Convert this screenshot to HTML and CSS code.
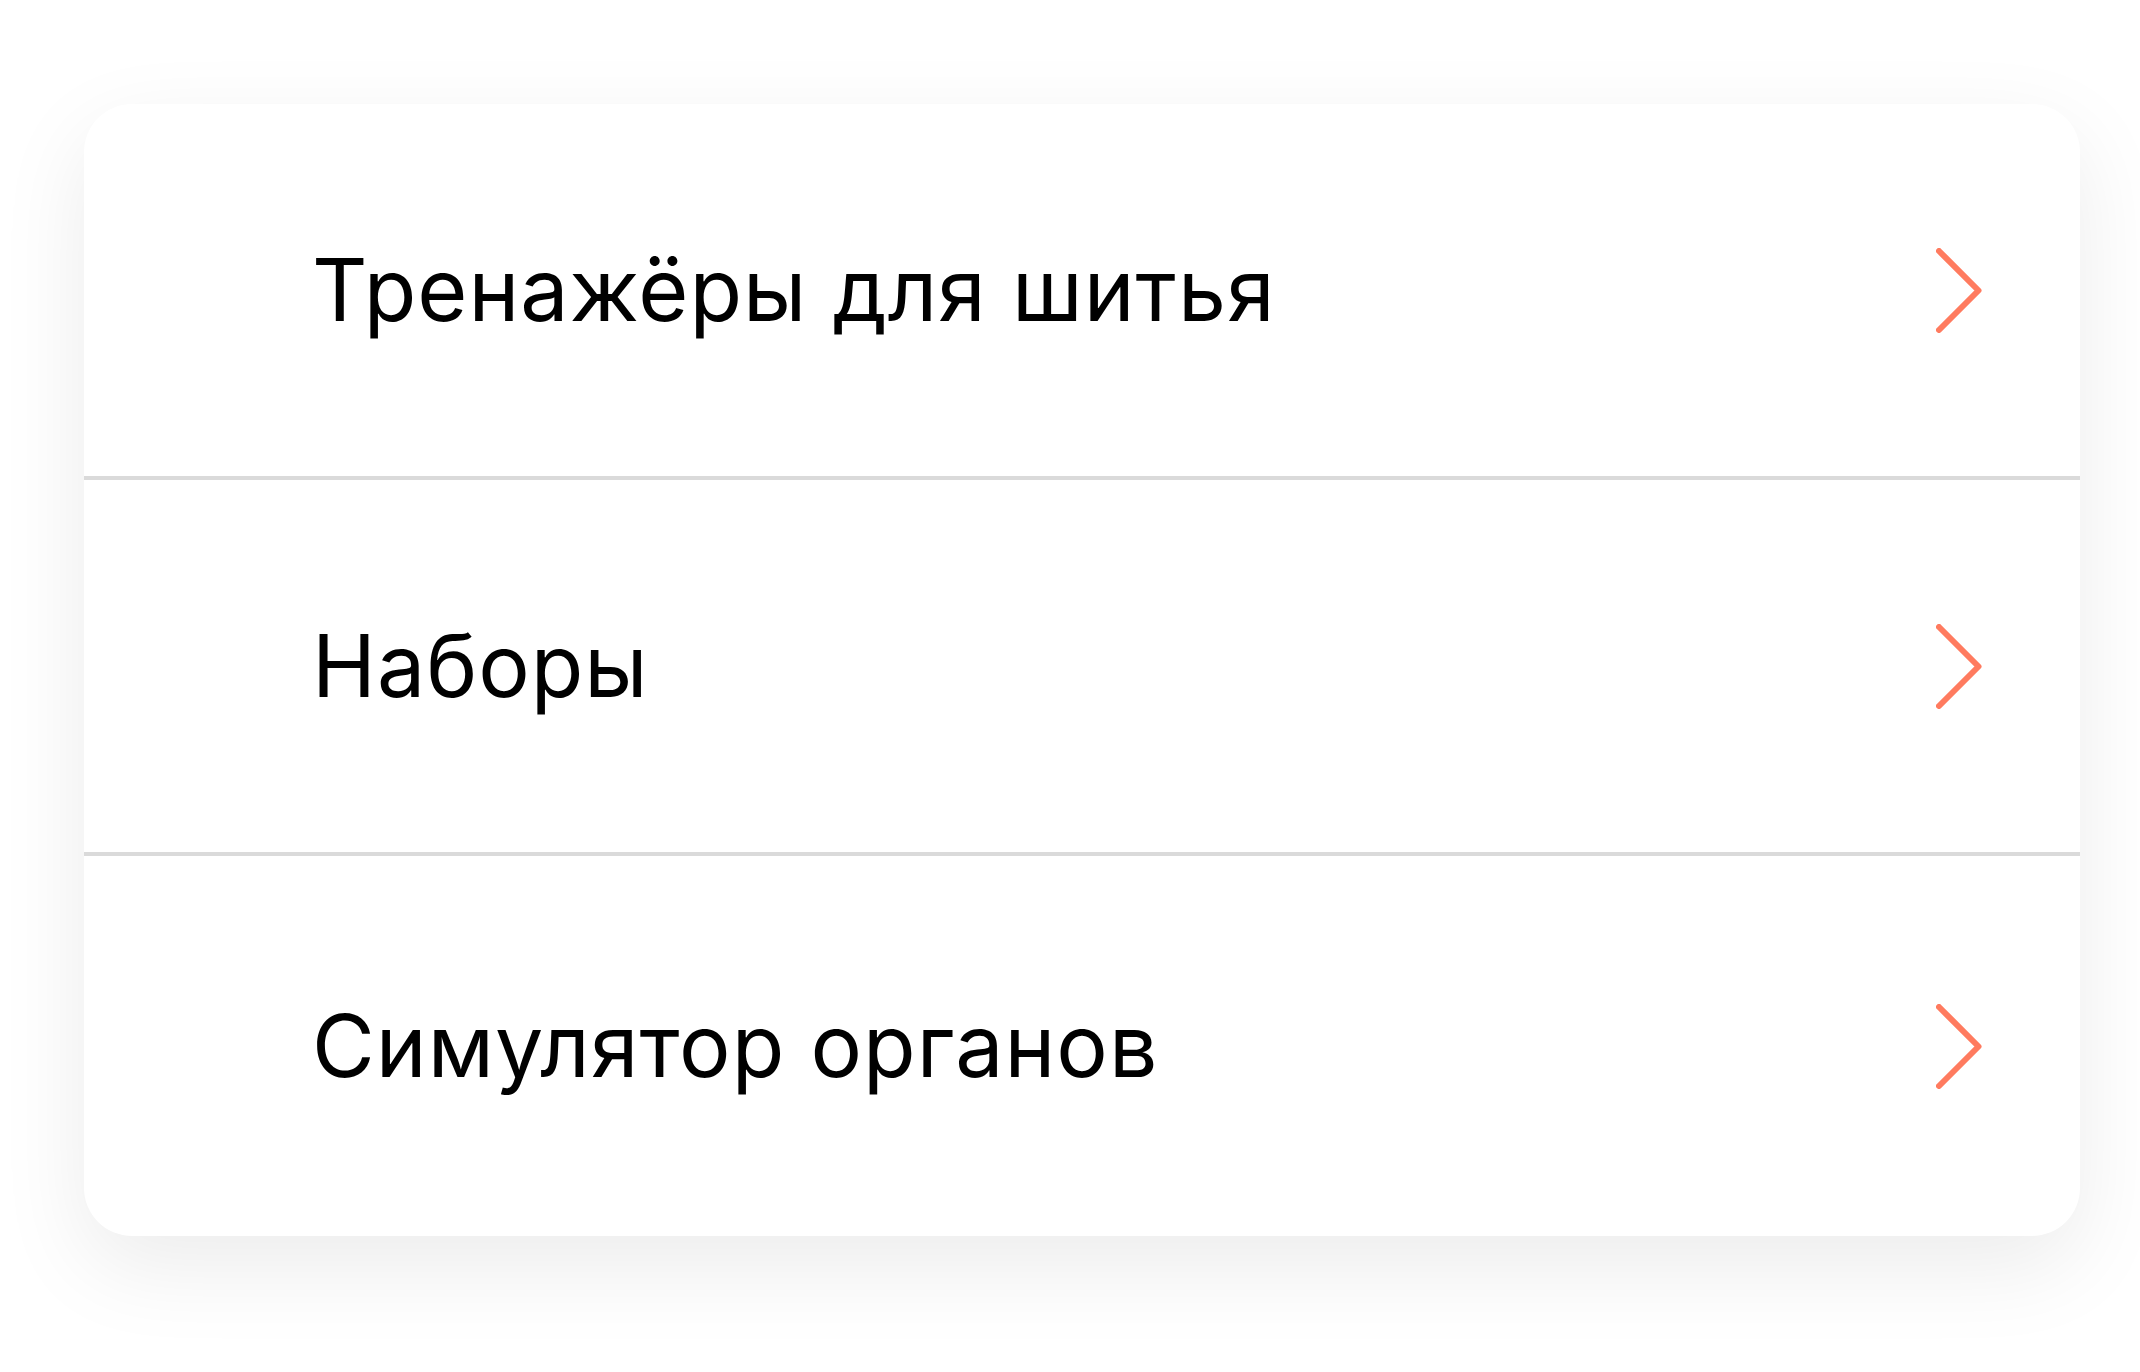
FILE: index.html
```html
<!DOCTYPE html>
<html>
<head>
    <title>Каталог</title>
<link rel="stylesheet" href="styles.css">
</head>
<body>
    <ul class="menu">
        <li class="menu-item">
            <span class="menu-title">Тренажёры для шитья</span>
            <svg class="chevron" width="46" height="85" viewBox="0 0 46 85"><polyline points="3,3 42.5,42.5 3,82"/></svg>
        </li>
        <li class="menu-item">
            <span class="menu-title">Наборы</span>
            <svg class="chevron" width="46" height="85" viewBox="0 0 46 85"><polyline points="3,3 42.5,42.5 3,82"/></svg>
        </li>
        <li class="menu-item">
            <span class="menu-title">Симулятор органов</span>
            <svg class="chevron" width="46" height="85" viewBox="0 0 46 85"><polyline points="3,3 42.5,42.5 3,82"/></svg>
        </li>
    </ul>
</body>
</html>
```

FILE: styles.css
```css
html,
body {
  height: 100%;
}

body {
  margin: 0;
  padding: 104px 60px 0 84px;
  box-sizing: border-box;
  background: #ffffff;
  font-family: "Inter", "Noto Sans", sans-serif;
}

.menu {
  list-style: none;
  margin: 0;
  padding: 0;
  width: 1996px;
  background: #ffffff;
  border-radius: 48px;
  box-shadow: 0 30px 90px rgba(0, 0, 0, 0.08);
  overflow: hidden;
}

.menu-item {
  display: flex;
  align-items: center;
  justify-content: space-between;
  height: 372px;
  padding: 0 98px 0 228px;
  border-bottom: 4px solid #dadada;
}

.menu-item:last-child {
  height: 380px;
  border-bottom: none;
}

.menu-title {
  font-size: 86px;
  letter-spacing: 1px;
  color: #000000;
  font-weight: 400;
}

.chevron {
  display: block;
}

.chevron polyline {
  fill: none;
  stroke: #ff7b5f;
  stroke-width: 6;
  stroke-linecap: round;
  stroke-linejoin: round;
}
```
